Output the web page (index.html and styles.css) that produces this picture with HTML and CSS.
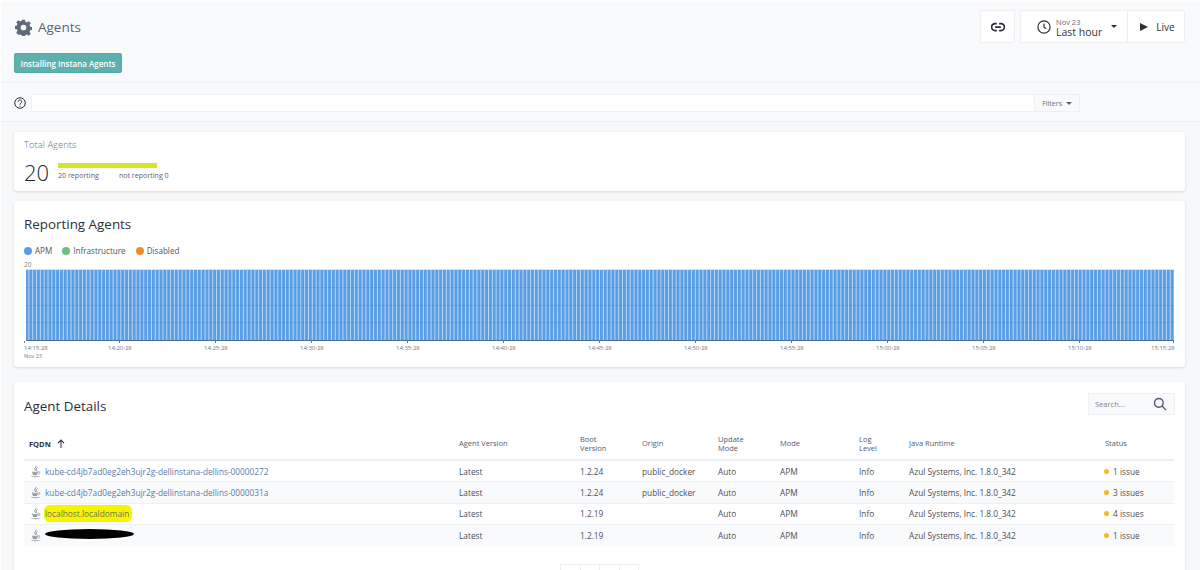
FILE: index.html
```html
<!DOCTYPE html>
<html lang="en">
<head>
<meta charset="utf-8">
<title>Agents</title>
<link rel="stylesheet" href="styles.css">
</head>
<body>
<svg class="defs" width="0" height="0" aria-hidden="true">
  <symbol id="java" viewBox="0 0 16 16">
    <path d="M8.6 1c1 1.6-2.4 2.6-1.400 4.600.3.600.8 1 .8 1.600M10.400 3.400c-1.600.8-1.800 1.600-1.200 2.800.2.400.2.8 0 1.200" fill="none" stroke="#6f7681" stroke-width="1"/>
    <path d="M3.600 8.600c1.600.7 6 .7 7.600 0M4.200 10.200c1.400.6 5 .6 6.400 0M4.800 11.600c1.200.5 3.800.5 5 0" fill="none" stroke="#6f7681" stroke-width="1"/>
    <path d="M11.400 8.400c2.200-.6 2.800 1.600.2 2.600" fill="none" stroke="#6f7681" stroke-width=".9"/>
    <path d="M2 13c3 1.600 9 1.600 12 0-2 2.600-10 2.600-12 0z" fill="#6f7681"/>
  </symbol>
</svg>

<header class="head">
  <div class="head-top">
    <div class="title-col">
      <h1 class="title">
        <svg class="gear" viewBox="0 0 24 24"><path fill="#5f6b7a" fill-rule="evenodd" d="M10 1h4l.6 3a8.300 8.300 0 0 1 2.200.9l2.600-1.700 2.800 2.800-1.700 2.600c.4.700.7 1.400.9 2.200l3 .6v4l-3 .6a8.300 8.300 0 0 1-.9 2.200l1.700 2.600-2.800 2.800-2.600-1.700c-.7.4-1.400.7-2.200.9l-.6 3h-4l-.6-3a8.300 8.300 0 0 1-2.200-.9L4.600 22.100l-2.800-2.800 1.700-2.600a8.300 8.300 0 0 1-.9-2.200l-3-.6v-4l3-.6c.2-.8.5-1.500.9-2.200L1.800 4.500 4.600 1.700l2.600 1.700c.7-.4 1.400-.7 2.200-.9zM12 8a4 4 0 1 0 0 8 4 4 0 0 0 0-8z"/></svg>
        Agents
      </h1>
      <button class="install">Installing Instana Agents</button>
    </div>
    <div class="tools">
      <button class="tool tool-link">
        <svg width="14" height="14" viewBox="0 0 24 24" fill="none" stroke="#2b2f36" stroke-width="3"><path d="M10 6H7a6 6 0 0 0 0 12h3M14 6h3a6 6 0 0 1 0 12h-3M7 12h10"/></svg>
      </button>
      <div class="tool-group">
        <button class="tool tool-time">
          <svg width="14" height="14" viewBox="0 0 24 24" fill="none" stroke="#2b2f36" stroke-width="2"><circle cx="12" cy="12" r="10.500"/><path d="M12 6v6.500l4 2.500"/></svg>
          <span class="time-text"><small>Nov 23</small><b>Last hour</b></span>
          <span class="caret dark"></span>
        </button>
        <button class="tool tool-live"><span class="play"></span>Live</button>
      </div>
    </div>
  </div>
</header>

<div class="filter-row">
  <svg width="12" height="12" viewBox="0 0 24 24" fill="none" stroke="#2b2f36" stroke-width="2"><circle cx="12" cy="12" r="10.500"/><path d="M8.500 9.500a3.500 3.500 0 1 1 5.500 2.800c-1.300.9-2 1.500-2 3"/><path d="M12 17.500v2"/></svg>
  <div class="filter-input"></div>
  <button class="filters">Filters <span class="caret"></span></button>
</div>

<main class="content">
  <section class="card total">
    <div class="total-label">Total Agents</div>
    <div class="total-body">
      <div class="total-num">20</div>
      <div class="total-bar-wrap">
        <div class="total-bar"></div>
        <div class="total-legend"><span>20 reporting</span><span>not reporting 0</span></div>
      </div>
    </div>
  </section>

  <section class="card reporting">
    <h2>Reporting Agents</h2>
    <div class="legend">
      <span><i class="dot apm"></i>APM</span>
      <span><i class="dot infra"></i>Infrastructure</span>
      <span><i class="dot dis"></i>Disabled</span>
    </div>
    <div class="y-label">20</div>
    <div class="chart"></div>
    <div class="axis">
      <span class="first">14:15:28<small>Nov 23</small></span>
      <span>14:20:28</span><span>14:25:28</span><span>14:30:28</span><span>14:35:28</span>
      <span>14:40:28</span><span>14:45:28</span><span>14:50:28</span><span>14:55:28</span>
      <span>15:00:28</span><span>15:05:28</span><span class="penult">15:10:28</span><span class="last">15:15:28</span>
    </div>
  </section>

  <section class="card details">
    <div class="details-head">
      <h2>Agent Details</h2>
      <div class="search">
        <span>Search...</span>
        <svg width="14" height="14" viewBox="0 0 24 24" fill="none" stroke="#4c5a70" stroke-width="2.400"><circle cx="10" cy="10" r="7.500"/><path d="M15.500 15.500L22.500 22.500"/></svg>
      </div>
    </div>
    <table class="agents">
      <colgroup>
        <col class="c1"><col class="c2"><col class="c3"><col class="c4"><col class="c5"><col class="c6"><col class="c7"><col class="c8"><col class="c9">
      </colgroup>
      <thead>
        <tr>
          <th class="fqdn-h">FQDN <svg class="arrow" width="8" height="9" viewBox="0 0 8 9" fill="none" stroke="#3b4049" stroke-width="1.100"><path d="M4 9V1M1 4l3-3 3 3"/></svg></th>
          <th>Agent Version</th><th>Boot<br>Version</th><th>Origin</th><th>Update<br>Mode</th><th>Mode</th><th>Log<br>Level</th><th>Java Runtime</th><th class="status-h">Status</th>
        </tr>
      </thead>
      <tbody>
        <tr>
          <td class="fq"><svg class="java"><use href="#java"/></svg><a>kube-cd4jb7ad0eg2eh3ujr2g-dellinstana-dellins-00000272</a></td>
          <td>Latest</td><td>1.2.24</td><td>public_docker</td><td>Auto</td><td>APM</td><td>Info</td><td>Azul Systems, Inc. 1.8.0_342</td><td><i class="st"></i>1 issue</td>
        </tr>
        <tr>
          <td class="fq"><svg class="java"><use href="#java"/></svg><a>kube-cd4jb7ad0eg2eh3ujr2g-dellinstana-dellins-0000031a</a></td>
          <td>Latest</td><td>1.2.24</td><td>public_docker</td><td>Auto</td><td>APM</td><td>Info</td><td>Azul Systems, Inc. 1.8.0_342</td><td><i class="st"></i>3 issues</td>
        </tr>
        <tr>
          <td class="fq"><svg class="java"><use href="#java"/></svg><a class="hl">localhost.localdomain</a></td>
          <td>Latest</td><td>1.2.19</td><td></td><td>Auto</td><td>APM</td><td>Info</td><td>Azul Systems, Inc. 1.8.0_342</td><td><i class="st"></i>4 issues</td>
        </tr>
        <tr>
          <td class="fq"><svg class="java"><use href="#java"/></svg><span class="redact"></span></td>
          <td>Latest</td><td>1.2.19</td><td></td><td>Auto</td><td>APM</td><td>Info</td><td>Azul Systems, Inc. 1.8.0_342</td><td><i class="st"></i>1 issue</td>
        </tr>
      </tbody>
    </table>
    <div class="pager"><span></span><span></span><span></span><span></span></div>
  </section>
</main>
</body>
</html>
```
FILE: styles.css
```css
* { box-sizing: border-box; }
html, body { margin: 0; height: 570px; overflow: hidden; }
body {
  background: #f7f8fa;
  border-top: 2px solid #fff;
  border-left: 1px solid #fff;
  font-family: "Open Sans", "Noto Sans", sans-serif;
  color: #3b4049;
  font-size: 8.5px;
}
.defs { position: absolute; }
button { font-family: inherit; cursor: pointer; }

.head { height: 81px; background: #f9fafc; border-bottom: 1px solid #eef0f3; padding: 8px 15px 0 13px; }
.head-top { display: flex; justify-content: space-between; align-items: flex-start; }
.title-col { display: flex; flex-direction: column; align-items: flex-start; }
.title { margin: 0; display: flex; align-items: center; gap: 6px; height: 34px; font-size: 13.500px; font-weight: 400; color: #5c6673; }
.gear { width: 17px; height: 17px; margin-left: 1px; }
.install { margin-top: 9px; height: 20px; width: 108px; padding: 0; border: 1px solid #58aaa8; border-radius: 2px; background: #5cb1ae; color: #fff; font-size: 8px; font-weight: 600; }

.tools { display: flex; gap: 5px; }
.tool { height: 33px; background: #fff; border: 1px solid #edeff2; border-radius: 2px; display: flex; align-items: center; justify-content: center; padding: 0; color: #2b2f36; }
.tool-link { width: 35px; }
.tool-group { display: flex; }
.tool-time { width: 107px; gap: 5px; justify-content: flex-start; padding-left: 16px; border-right: 0; border-radius: 2px 0 0 2px; }
.time-text { display: flex; flex-direction: column; text-align: left; line-height: 10px; }
.time-text small { font-size: 7.500px; color: #656b75; }
.time-text b { font-size: 10.500px; font-weight: 500; color: #2f343c; }
.tool-time .dark { margin-left: 4px; margin-top: -1px; }
.tool-live { width: 58px; gap: 8px; font-size: 10px; font-weight: 500; border-radius: 0 2px 2px 0; padding-left: 3px; }
.play { width: 0; height: 0; border-left: 8px solid #2b2f36; border-top: 4.500px solid transparent; border-bottom: 4.500px solid transparent; }
.caret { display: inline-block; width: 0; height: 0; border-left: 3px solid transparent; border-right: 3px solid transparent; border-top: 3px solid #5a6270; vertical-align: middle; margin-left: 2px; }
.caret.dark { border-left-width: 3.500px; border-right-width: 3.500px; border-top: 3.500px solid #2b2f36; }

.filter-row { height: 39px; background: #f9fafc; border-bottom: 1px solid #eef0f3; display: flex; align-items: center; padding: 2px 0 0 13px; }
.filter-input { margin-left: 5px; width: 1003px; height: 18px; background: #fff; border: 1px solid #f0f1f4; border-right: 0; }
.filters { width: 46px; height: 18px; padding: 0; background: #f9fafc; border: 1px solid #eef0f3; font-size: 7px; color: #666d78; }

.content { padding: 10px 15px 0 13px; display: flex; flex-direction: column; }
.card { background: #fff; border-radius: 3px; box-shadow: 0 1px 3px rgba(40, 50, 70, .16); padding: 0 10px; }

.total { height: 59px; }
.total-label { font-size: 9.500px; font-weight: 300; color: #6f747e; padding-top: 6px; line-height: 13px; }
.total-body { display: flex; gap: 9px; margin-top: 3px; }
.total-num { font-size: 22px; font-weight: 300; color: #20252c; line-height: 30px; width: 25px; margin-top: 3px; }
.total-bar-wrap { width: 99px; padding-top: 9px; }
.total-bar { height: 5px; background: #d7e22a; }
.total-legend { display: flex; gap: 20px; white-space: nowrap; font-size: 7.100px; color: #5d6470; line-height: 10px; margin-top: 2px; }

.reporting { height: 166px; margin-top: 10px; }
h2 { margin: 0; font-size: 13.400px; font-weight: 500; color: #2b3038; }
.reporting h2 { padding-top: 13px; line-height: 20px; }
.legend { display: flex; gap: 10px; margin-top: 11px; font-size: 8.100px; color: #4f5662; line-height: 12px; }
.legend span { display: flex; align-items: center; gap: 3px; }
.dot { width: 8px; height: 8px; border-radius: 50%; }
.apm { background: #5a9de2; }
.infra { background: #6fbf7f; }
.dis { background: #e98f2c; }
.y-label { font-size: 6.500px; color: #7a808a; line-height: 8px; margin-top: 4px; }
.chart {
  margin: 0 0 0 2px;
  width: 1148px;
  height: 72px;
  border-top: 1px solid #cfe1f5;
  border-bottom: 1px solid #4a6f9c;
  background:
    linear-gradient(to bottom, transparent 17px, rgba(50, 90, 140, .16) 17px, rgba(50, 90, 140, .16) 18px, transparent 18px, transparent 35px, rgba(50, 90, 140, .16) 35px, rgba(50, 90, 140, .16) 36px, transparent 36px, transparent 52px, rgba(50, 90, 140, .16) 52px, rgba(50, 90, 140, .16) 53px, transparent 53px),
    repeating-linear-gradient(to right, #5a9fe6 0, #5a9fe6 1.900px, #bcd8f5 2.900px, #5a9fe6 3.830px);
}
.axis { display: flex; font-size: 6px; color: #747a84; line-height: 8px; margin-top: 3px; }
.axis small { display: block; font-size: 5.500px; }
.axis span { width: 96px; flex: none; white-space: nowrap; position: relative; }
.axis span::before { content: ""; position: absolute; left: 11px; top: -3px; width: 1px; height: 2px; background: #6f7681; }
.axis .first { width: 84px; }
.axis .first::before { left: 0; }
.axis .penult { width: 83px; }
.axis .last { width: 23px; }
.axis .last::before { left: 22px; }

.details { height: 210px; flex: none; margin-top: 15px; }
.details-head { display: flex; justify-content: space-between; align-items: flex-start; padding-top: 11px; }
.details h2 { line-height: 24px; padding-top: 1px; }
.search { width: 87px; height: 22px; background: #f9fafc; border: 1px solid #eef0f3; display: flex; align-items: center; justify-content: space-between; padding: 0 7px 0 6px; font-size: 7.500px; color: #7d828b; }

.agents { width: 1150px; border-collapse: collapse; table-layout: fixed; margin-top: 10px; }
.c1 { width: 435px; } .c2 { width: 121px; } .c3 { width: 62px; } .c4 { width: 76px; } .c5 { width: 62px; }
.c6 { width: 79px; } .c7 { width: 50px; } .c8 { width: 195px; } .c9 { width: 70px; }
.agents th { height: 32px; font-size: 7.500px; font-weight: 400; color: #555c67; text-align: left; line-height: 9px; padding: 0; border-bottom: 2px solid #eceef1; }
.agents th.fqdn-h { font-weight: 700; padding-left: 5px; color: #2b3038; }
.agents .status-h { padding-left: 1px; }
.arrow { margin-left: 4px; vertical-align: -1px; }
.agents td { height: 21.500px; padding: 0; font-size: 8.300px; color: #4a505b; border-bottom: 1px solid #eef0f3; white-space: nowrap; }
.agents tbody tr:nth-child(even) { background: #f9fafc; }
.agents tbody tr:last-child td { border-bottom: 0; }
.agents .fq { padding-left: 5px; }
.java { width: 13px; height: 15px; vertical-align: middle; margin-right: 3px; }
.fq a { color: #5b7ba6; vertical-align: middle; }
.fq a.hl { background: #f8f400; color: #5f7a55; border-radius: 6px; padding: 3px 3px 3px 1px; margin-left: -1px; }
.redact { display: inline-block; vertical-align: middle; width: 89px; height: 10px; background: #000; border-radius: 50%; margin-top: -3px; }
.st { display: inline-block; width: 5px; height: 5px; border-radius: 50%; background: #f2bd1d; margin-right: 4px; vertical-align: 1px; }

.pager { display: flex; width: 79px; margin: 18px 0 0 536px; height: 10px; }
.pager span { flex: 1; border: 1px solid #eceef1; border-left-width: 0; background: #fff; }
.pager span:first-child { border-left-width: 1px; }
```
